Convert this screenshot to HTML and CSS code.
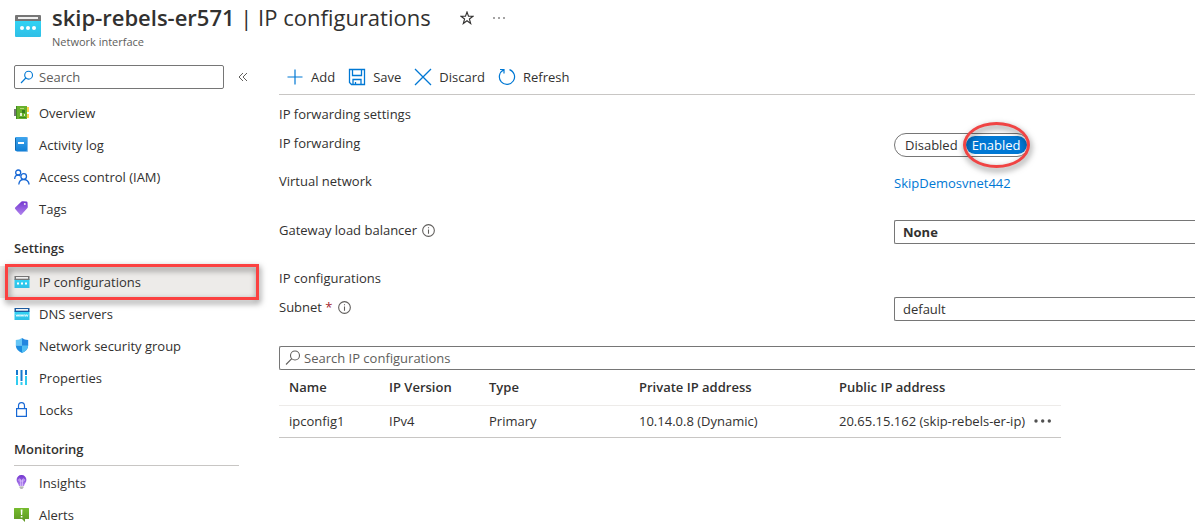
FILE: index.html
```html
<!DOCTYPE html>
<html lang="en">
<head>
<meta charset="utf-8">
<title>skip-rebels-er571 | IP configurations</title>
<link rel="stylesheet" href="styles.css">
</head>
<body>
<svg class="defs" width="0" height="0" aria-hidden="true">
  <defs>
    <linearGradient id="cyan" x1="0" y1="0" x2="0" y2="1"><stop offset="0" stop-color="#32d4f5"/><stop offset="1" stop-color="#2fbfe6"/></linearGradient>
    <linearGradient id="blue" x1="0" y1="0" x2="0" y2="1"><stop offset="0" stop-color="#3fa5ee"/><stop offset="1" stop-color="#1280d6"/></linearGradient>
    <linearGradient id="purple" x1="0" y1="0" x2="0" y2="1"><stop offset="0" stop-color="#7336cf"/><stop offset="1" stop-color="#b184ee"/></linearGradient>
    <linearGradient id="green" x1="0" y1="0" x2="0" y2="1"><stop offset="0" stop-color="#76bc2d"/><stop offset="1" stop-color="#5e9624"/></linearGradient>
  </defs>
</svg>
<header class="header">
  <svg class="resource-icon" width="28" height="24" viewBox="0 0 28 24" aria-hidden="true">
    <path fill="url(#cyan)" d="M1 6h26v16q0 1-1 1H2q-1 0-1-1z"/>
    <path fill="#767676" d="M2 1h24q1 0 1 1v5H1V2q0-1 1-1z"/>
    <path fill="#f0f0f0" d="M4 3h20v2H4z"/>
    <circle cx="8" cy="14" r="2" fill="#fff"/><circle cx="14" cy="14" r="2" fill="#fff"/><circle cx="20" cy="14" r="2" fill="#fff"/>
  </svg>
  <div>
    <div class="title-row">
      <h1 class="title"><strong>skip-rebels-er571</strong> | IP configurations</h1>
      <button class="icon-button" aria-label="Favorite"><svg width="14" height="14" viewBox="0 0 14 14"><path fill="none" stroke="#323130" stroke-width="1.1" d="M7 1l1.5 4.3H13L9.4 8l1.3 4.5L7 9.8l-3.7 2.7L4.6 8 1 5.3h4.5z"/></svg></button>
      <button class="icon-button" aria-label="More"><svg width="12" height="12" viewBox="0 0 12 12" fill="#323130"><circle cx="1" cy="6" r=".8"/><circle cx="6" cy="6" r=".8"/><circle cx="11" cy="6" r=".8"/></svg></button>
    </div>
    <p class="subtitle">Network interface</p>
  </div>
</header>
<div class="layout">
  <nav class="sidebar">
    <div class="side-search">
      <label class="search-box">
        <svg width="14" height="14" viewBox="0 0 14 14" fill="none" stroke="#0078d4" stroke-width="1.1"><circle cx="8.6" cy="5.2" r="3.9"/><path d="M5.8 8L1 13"/></svg>
        <input type="search" placeholder="Search" aria-label="Search">
      </label>
      <button class="icon-button" aria-label="Collapse menu"><svg width="10" height="10" viewBox="0 0 10 10" fill="none" stroke="#605e5c"><path d="M5 1L1 5l4 4M9 1L5 5l4 4"/></svg></button>
    </div>
    <ul class="menu">
      <li><a class="item" href="#"><svg width="16" height="16" viewBox="0 0 16 16"><path fill="#777" d="M0 4h2v7H0z"/><path fill="#ffd24a" d="M13 2h2v5h-2zm0 7h2v4h-2z"/><path fill="#68b02c" d="M2 1h11v13H2z"/><path fill="#3f8a20" d="M2 1h1v13H2zM5 12h7v1H5z"/><path fill="#b5dc72" d="M6 3h4v1H6z"/><path fill="#3a7a1c" d="M8 5h3v3H8z"/><path fill="#e5f1d5" d="M6 8h2v3H6zM10 9h1v2h-1z"/></svg>Overview</a></li>
      <li><a class="item" href="#"><svg width="16" height="16" viewBox="0 0 16 16"><path fill="#83b9e9" d="M12 0h1q1 0 1 1v13q0 1-1 1H3l-1-1h10z"/><rect x="1" y="0" width="12" height="14" rx="1" fill="url(#blue)"/><path fill="#1268ad" d="M1 1h1v12H1z"/><path fill="#fff" d="M4 5h6v2H4z"/></svg>Activity log</a></li>
      <li><a class="item" href="#"><svg width="16" height="16" viewBox="0 0 16 16" fill="none" stroke="#1768d5" stroke-width="1.3"><circle cx="4.2" cy="3.5" r="2.5"/><path d="M.7 10Q.8 6.2 4.2 6.2q1.3 0 2.2.8"/><circle cx="9.7" cy="7.5" r="2.8"/><path d="M4.8 15.5q.4-5 4.9-5t5.5 5"/></svg>Access control (IAM)</a></li>
      <li><a class="item" href="#"><svg width="16" height="16" viewBox="0 0 16 16"><path fill="url(#purple)" d="M1.200 6.600L7.500.600q.4-.4 1-.4l3.900.300q1 .1 1.100 1.100l.3 4.400q0 .6-.4 1.100l-6 6.600q-.6.600-1.200 0L1.200 8q-.6-.700 0-1.400z"/><circle cx="10.800" cy="2.900" r="1" fill="#eee"/></svg>Tags</a></li>
    </ul>
    <h2 class="group-title">Settings</h2>
    <ul class="menu">
      <li><a class="item selected" href="#" aria-current="page"><svg width="16" height="16" viewBox="0 0 16 16"><path fill="url(#cyan)" d="M.5 5h15v9H.5z"/><path fill="#767676" d="M.5 2h15v4H.5z"/><path fill="#f2f2f2" d="M2 3h12v1.7H2z"/><path fill="#fff" d="M3 8.500h2v2H3zm4 0h2v2H7zm4 0h2v2h-2z"/></svg>IP configurations</a></li>
      <li><a class="item" href="#"><svg width="16" height="16" viewBox="0 0 16 16"><path fill="url(#cyan)" d="M.5 5h15v9H.5z"/><path fill="#1b5a9f" d="M.5 2h15v4H.5z"/><path fill="#f2f2f2" d="M2 3h12v1.7H2z"/><path fill="none" stroke="#fff" stroke-width=".8" d="M2 8.500l1 2 1-2 1 2 .7-2M6.300 8.500l.7 2 1-2 1 2 .7-2M10.500 8.500l.7 2 1-2 1 2 .8-2"/></svg>DNS servers</a></li>
      <li><a class="item" href="#"><svg width="16" height="16" viewBox="0 0 16 16"><path fill="#2386df" d="M8 0q2.500 1.800 6.200 2v5.400Q14 12 8 15z"/><path fill="#65c5f5" d="M8 0Q5.500 1.800 1.800 2v5.400h6.200z"/><path fill="#1b8ce0" d="M1.800 7.400H8V15Q2 12 1.800 7.400z"/><path fill="#50bdf2" d="M8 7.400h6.200Q14 12 8 15z"/></svg>Network security group</a></li>
      <li><a class="item" href="#"><svg width="16" height="16" viewBox="0 0 16 16"><path fill="#32cdf0" d="M2 6h2v9H2zm9 0h2v9h-2zM6.500 12h2v3h-2z"/><path fill="#1679ce" d="M2 0h2v5H2zm9 0h2v5h-2zM6.500 0h2v11h-2z"/></svg>Properties</a></li>
      <li><a class="item" href="#"><svg width="16" height="16" viewBox="0 0 16 16" fill="none" stroke="#1768d5" stroke-width="1.2"><path d="M2.600 6.600h9.800v7.800H2.600zM4.500 6.500V4q0-3.300 3-3.300t3 3.300v2.500"/></svg>Locks</a></li>
    </ul>
    <h2 class="group-title">Monitoring</h2>
    <ul class="menu">
      <li><a class="item" href="#"><svg width="16" height="16" viewBox="0 0 16 16"><path fill="url(#purple)" d="M7.500 0a4.800 4.800 0 014.900 4.900c0 2.600-2.100 3.600-2.400 6.100H5C4.700 8.500 2.600 7.500 2.600 4.900A4.800 4.800 0 017.500 0z"/><path fill="none" stroke="#dfc9ff" stroke-width=".8" d="M6.700 11V6H5.500a1 1 0 111.200-1.200V6h1.700V4.800A1 1 0 119.500 6H8.400v5"/><path fill="#a0a0a0" d="M5.500 11.500h4v1.200h-4zM6 13.200h3L8.500 14h-2z"/></svg>Insights</a></li>
      <li><a class="item" href="#"><svg width="16" height="16" viewBox="0 0 16 16"><path fill="url(#green)" d="M.5 1h14q.5 0 .5.500v10q0 .5-.5.500H11v3l-3-3H.500Q0 12 0 11.500v-10Q0 1 .500 1z"/><path fill="#fff" d="M6.700 2.500h1.800L8.200 8H7zM6.800 9h1.600v1.600H6.800z"/></svg>Alerts</a></li>
    </ul>
  </nav>
  <main class="main">
    <div class="toolbar">
      <button class="command"><svg width="18" height="18" viewBox="0 0 18 18" fill="none" stroke="#0078d4" stroke-width="1.200"><path d="M9 1.500v15M1.500 9h15"/></svg>Add</button>
      <button class="command"><svg width="18" height="18" viewBox="0 0 18 18" fill="none" stroke="#0078d4" stroke-width="1.300"><path d="M1.500 1.500h15v15H3.500l-2-2zM4.500 1.500v6h9v-6M5 16.500v-5h8v5M7.500 16v-2"/></svg>Save</button>
      <button class="command"><svg width="18" height="18" viewBox="0 0 18 18" fill="none" stroke="#0078d4" stroke-width="1.300"><path d="M1 1l16 16M17 1L1 17"/></svg>Discard</button>
      <button class="command"><svg width="18" height="18" viewBox="0 0 18 18" fill="none" stroke="#0078d4" stroke-width="1.200"><path d="M11.500 1.600A7.600 7.600 0 11 5.500 2M2 1.500h4v4"/></svg>Refresh</button>
    </div>
    <h2 class="section-title">IP forwarding settings</h2>
    <div class="row">
      <span class="label" id="forwarding">IP forwarding</span>
      <div class="toggle" role="radiogroup" aria-labelledby="forwarding">
        <label class="option"><input type="radio" name="forwarding">Disabled</label>
        <label class="option highlighted"><input type="radio" name="forwarding" checked>Enabled</label>
      </div>
    </div>
    <div class="row network-row">
      <span class="label">Virtual network</span>
      <a class="link" href="#">SkipDemosvnet442</a>
    </div>
    <div class="row">
      <label class="label" for="gateway">Gateway load balancer <svg class="info" width="13" height="13" viewBox="0 0 12 12" fill="none" stroke="#605e5c"><circle cx="6" cy="6" r="5.400"/><path d="M6 5v4M6 3v1"/></svg></label>
      <select class="field strong" id="gateway"><option>None</option></select>
    </div>
    <h2 class="section-title config-title">IP configurations</h2>
    <div class="row">
      <label class="label" for="subnet">Subnet <span class="required">*</span> <svg class="info" width="13" height="13" viewBox="0 0 12 12" fill="none" stroke="#605e5c"><circle cx="6" cy="6" r="5.400"/><path d="M6 5v4M6 3v1"/></svg></label>
      <select class="field" id="subnet"><option>default</option></select>
    </div>
    <label class="search-box table-search">
      <svg width="16" height="16" viewBox="0 0 16 16" fill="none" stroke="#605e5c" stroke-width="1.100"><circle cx="10" cy="5.500" r="4.500"/><path d="M6.800 8.700L1 14.500"/></svg>
      <input type="search" placeholder="Search IP configurations" aria-label="Search IP configurations">
    </label>
    <table class="table">
      <colgroup><col class="col-s"><col class="col-s"><col class="col-m"><col class="col-l"><col class="col-l"><col class="col-menu"></colgroup>
      <thead><tr><th>Name</th><th>IP Version</th><th>Type</th><th>Private IP address</th><th>Public IP address</th><th></th></tr></thead>
      <tbody><tr><td>ipconfig1</td><td>IPv4</td><td>Primary</td><td>10.14.0.8 (Dynamic)</td><td>20.65.15.162 (skip-rebels-er-ip)</td><td><button class="icon-button" aria-label="Row actions"><svg width="18" height="4" viewBox="0 0 18 4" fill="#505050"><circle cx="2" cy="2" r="1.700"/><circle cx="8.700" cy="2" r="1.700"/><circle cx="15.300" cy="2" r="1.700"/></svg></button></td></tr></tbody>
    </table>
  </main>
</div>
</body>
</html>
```
FILE: styles.css
```css
* { box-sizing: border-box; }
body {
  margin: 0;
  overflow: hidden;
  background: #fff;
  color: #323130;
  font: 13px/20px "Open Sans", "Noto Sans", sans-serif;
}
button, input, select { font: inherit; color: inherit; }
button { border: 0; padding: 0; background: none; display: inline-flex; align-items: center; }
h1, h2, p, ul { margin: 0; padding: 0; }
ul { list-style: none; }
a { text-decoration: none; }
svg { flex: none; }
.defs { position: absolute; }

.header { display: flex; gap: 10px; padding: 1px 14px 0; height: 65px; }
.resource-icon { margin-top: 13px; }
.title-row { display: flex; align-items: center; }
.title { font-size: 22px; line-height: 33px; font-weight: 400; white-space: nowrap; margin-right: 29px; }
.title strong { font-weight: 600; }
.title-row .icon-button + .icon-button { margin-left: 19px; }
.subtitle { font-size: 11px; line-height: 16px; color: #605e5c; }

.layout { display: grid; grid-template-columns: 259px minmax(0, 1fr); gap: 20px; }
.side-search { display: flex; align-items: center; gap: 14px; padding: 0 11px 8px 14px; }
.search-box {
  display: flex; align-items: center; flex: 1; gap: 5px;
  height: 24px; padding: 0 5px;
  border: 1px solid #767676; border-radius: 2px; color: #605e5c;
}
.search-box input { flex: 1; min-width: 0; border: 0; padding: 0; background: none; outline: 0; }
.search-box input::placeholder { color: #605e5c; opacity: 1; }
.item { position: relative; display: flex; align-items: center; gap: 9px; height: 32px; padding-left: 14px; color: #323130; }
.selected { background: #edebe9; }
.selected::after {
  content: ""; position: absolute; inset: -2px 0 -2px 5px;
  border: 3px solid #fb4141; filter: drop-shadow(1px 3px 3px rgba(0, 0, 0, .55));
}
.group-title { margin: 0 20px 1px 14px; padding: 13px 0 6px; border-bottom: 1px solid #c8c6c4; font-size: 13px; line-height: 20px; font-weight: 600; }

.toolbar { display: flex; gap: 13px; height: 30px; padding: 3px 0 8px 7px; border-bottom: 1px solid #c8c6c4; }
.command { gap: 7px; }
.section-title { padding: 9px 0; font-size: 13px; line-height: 20px; font-weight: 400; }
.row { display: grid; grid-template-columns: minmax(0, 615px) minmax(300px, 1fr); align-items: start; }
.network-row { padding: 14px 0 27px; }
.network-row .link { padding-top: 2px; color: #0078d4; justify-self: start; }
.info { margin-left: 2px; vertical-align: -2px; }
.required { color: #a4262c; }
.field {
  appearance: none; width: 100%; height: 24px; padding: 0 8px;
  border: 1px solid #767676; border-right: 0; border-radius: 2px 0 0 2px; background: #fff;
}
.strong { font-weight: 700; }
.config-title { padding-top: 24px; }
.toggle { display: flex; justify-self: start; align-items: center; height: 24px; padding: 0 1px 0 2px; border: 1px solid #767676; border-radius: 12px; }
.option { position: relative; height: 18px; line-height: 18px; padding: 0 6px; border-radius: 9px; }
.option:first-child { padding: 0 8px; }
.option input { position: absolute; inset: 0; margin: 0; opacity: 0; }
.option:has(:checked) { background: #0078d4; color: #fff; }
.highlighted::after {
  content: ""; position: absolute; inset: -14px -3px;
  border: 3px solid #f04444; border-radius: 50%; filter: drop-shadow(1px 3px 3px rgba(0, 0, 0, .55));
}
.table-search { margin-top: 25px; border-right: 0; border-radius: 2px 0 0 2px; gap: 3px; }
.table { border-collapse: collapse; table-layout: fixed; width: 782px; }
.table th, .table td { padding: 0 10px; text-align: left; white-space: nowrap; }
.table th { height: 35px; font-weight: 600; border-bottom: 1px solid #edebe9; }
.table td { height: 32px; border-bottom: 1px solid #c8c6c4; }
.table td:last-child { padding: 0 5px 4px; }
.table .icon-button { vertical-align: middle; }
.col-s { width: 100px; }
.col-m { width: 150px; }
.col-l { width: 200px; }
.col-menu { width: 32px; }
```
